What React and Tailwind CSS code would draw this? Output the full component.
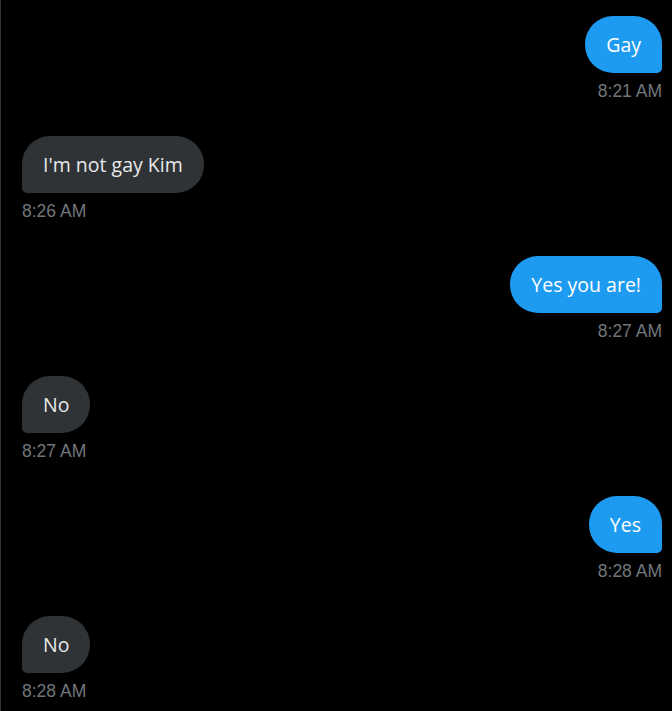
const messages = [
  { id: 1, text: 'Gay', time: '8:21 AM', mine: true },
  { id: 2, text: "I'm not gay Kim", time: '8:26 AM', mine: false },
  { id: 3, text: 'Yes you are!', time: '8:27 AM', mine: true },
  { id: 4, text: 'No', time: '8:27 AM', mine: false },
  { id: 5, text: 'Yes', time: '8:28 AM', mine: true },
  { id: 6, text: 'No', time: '8:28 AM', mine: false },
]

const Message = ({ msg }) => {
  return (
    <div className={`flex flex-col h-[120px] ${msg.mine ? 'items-end' : 'items-start'}`}>
      <div
        className={`px-[21px] py-[15.5px] text-[19.5px] leading-[26px] font-['Open_Sans',sans-serif]
          ${msg.mine
            ? 'bg-[#1d9bf0] text-white rounded-[28px] rounded-br-[5px]'
            : 'bg-[#2f3336] text-[#e7e9ea] rounded-[28px] rounded-bl-[5px]'}`}
      >
        {msg.text}
      </div>
      <span className="mt-[8px] text-[17.5px] leading-[21px] text-[#71767b] font-['Liberation_Sans',Arial,sans-serif]">
        {msg.time}
      </span>
    </div>
  )
}

export default function App() {
  return (
    <div className="w-[672px] h-[711px] bg-black overflow-hidden border-l border-[#2f3336]">
      <div className="flex flex-col pt-4 pl-[21px] pr-[10px]">
        {messages.map((msg) => (
          <Message key={msg.id} msg={msg} />
        ))}
      </div>
    </div>
  )
}
